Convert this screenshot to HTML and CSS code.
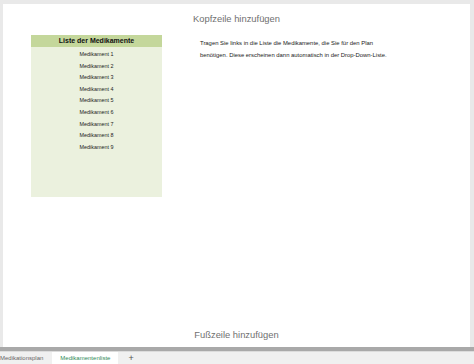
FILE: index.html
```html
<!DOCTYPE html>
<html lang="de">
<head>
  <meta charset="UTF-8">
  <meta name="viewport" content="width=device-width, initial-scale=1.0">
  <title>Medikamentenliste</title>
  <link rel="stylesheet" href="styles.css">
</head>
<body>

  <div class="sheet">
    <div class="page-header">Kopfzeile hinzufügen</div>

    <div class="content">
      <div class="med-list">
        <div class="med-list-title">Liste der Medikamente</div>
        <div class="med-list-body">
          <div class="med-item">Medikament 1</div>
          <div class="med-item">Medikament 2</div>
          <div class="med-item">Medikament 3</div>
          <div class="med-item">Medikament 4</div>
          <div class="med-item">Medikament 5</div>
          <div class="med-item">Medikament 6</div>
          <div class="med-item">Medikament 7</div>
          <div class="med-item">Medikament 8</div>
          <div class="med-item">Medikament 9</div>
        </div>
      </div>

      <div class="hint">
        Tragen Sie links in die Liste die Medikamente, die Sie für den Plan<br>
        benötigen. Diese erscheinen dann automatisch in der Drop-Down-Liste.
      </div>
    </div>

    <div class="page-footer">Fußzeile hinzufügen</div>
  </div>

  <div class="divider"></div>

  <div class="tabs">
    <div class="tab">Medikationsplan</div>
    <div class="tab active">Medikamentenliste</div>
    <div class="tab add">+</div>
  </div>

</body>
</html>
```

FILE: styles.css
```css
body {
  margin: 0;
  font-family: "Liberation Sans", Arial, sans-serif;
  background-color: #e9e9e9;
  height: 364px;
  overflow: hidden;
}
.sheet {
  margin: 4px 4px 0 3px;
  height: 343px;
  background-color: white;
  display: flex;
  flex-direction: column;
}
.page-header {
  text-align: center;
  color: #6f6f6f;
  font-size: 9.4px;
  line-height: 12px;
  margin-top: 9px;
}
.content {
  display: flex;
  margin-top: 10px;
  padding-left: 28px;
}
.med-list {
  width: 131px;
}
.med-list-title {
  background-color: #c4d79b;
  height: 12px;
  line-height: 12px;
  text-align: center;
  font-weight: bold;
  font-size: 7px;
  color: #111;
}
.med-list-body {
  background-color: #ebf1de;
  height: 150px;
  padding-top: 2px;
  box-sizing: border-box;
}
.med-item {
  text-align: center;
  font-size: 5.4px;
  line-height: 11.6px;
  color: #222;
}
.hint {
  margin-left: 38px;
  margin-top: 2px;
  font-size: 5.9px;
  line-height: 12px;
  color: #222;
  white-space: nowrap;
}
.page-footer {
  margin-top: auto;
  margin-bottom: 6px;
  text-align: center;
  color: #6f6f6f;
  font-size: 9.4px;
  line-height: 12px;
}
.divider {
  height: 4px;
  background-color: #a9a9a9;
}
.tabs {
  display: flex;
  height: 13px;
  background-color: #f0f0f0;
  border-top: 1px solid #dcdcdc;
}
.tab {
  font-size: 6px;
  line-height: 13px;
  color: #666;
  padding: 0 9px 0 0;
}
.tab.active {
  background-color: white;
  color: #2e8b57;
  padding: 0 8px;
}
.tab.add {
  font-size: 9px;
  color: #555;
  padding: 0 10px;
}
```
